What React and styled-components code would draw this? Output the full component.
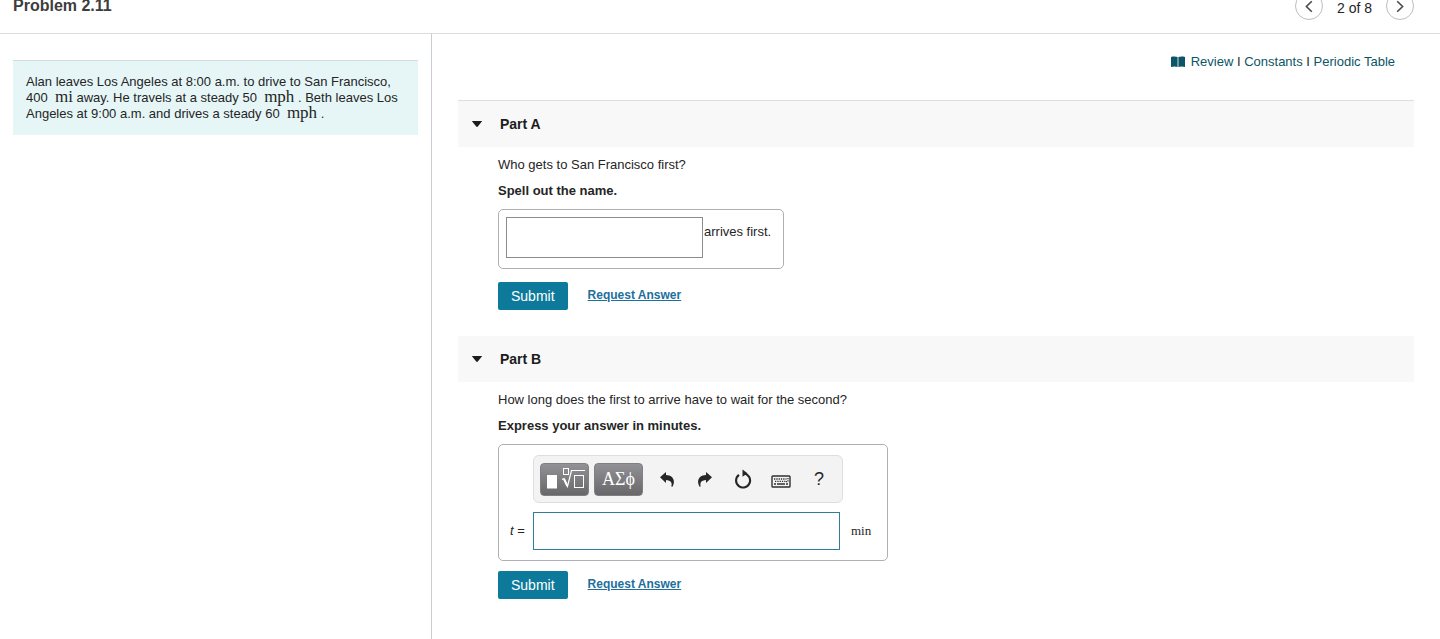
import React, { useState } from "react";
import styled, { createGlobalStyle } from "styled-components";

const GlobalStyle = createGlobalStyle`
  * {
    box-sizing: border-box;
  }

  body {
    margin: 0;
    background: #fff;
    color: #252525;
    font-family: "Liberation Sans", Arial, Helvetica, sans-serif;
    font-size: 13px;
    line-height: 16px;
  }

  button, input {
    font-family: inherit;
  }
`;

const ChevronIcon = ({ right }) => (
  <svg width="8" height="14" viewBox="0 0 8 14" fill="none" stroke="#4a4a4a" strokeWidth="1.6">
    <path d={right ? "M1.2 2.2 6.600 7.500 1.200 12.800" : "M6.800 2.200 1.400 7.500l5.400 5.300"} />
  </svg>
);

const BookIcon = () => (
  <svg width="14" height="12" viewBox="0 0 14 12" fill="#0b5566">
    <path d="M0 .9C2.2 .3 4.8 .3 6.6 1v10C4.8 10.2 2.3 10.2 0 11z" />
    <path d="M14 .9C11.8 .3 9.2 .3 7.4 1v10c1.8-.8 4.3-.8 6.6 0z" />
  </svg>
);

const CaretIcon = () => (
  <svg width="12" height="6" viewBox="0 0 12 6" fill="#1c1c1c">
    <path d="M.8 0h10.4L7 5.3a1.300 1.300 0 0 1-2 0z" />
  </svg>
);

const TemplateIcon = () => (
  <svg width="40" height="24" viewBox="0 0 40 24" fill="none" stroke="#fff">
    <rect x="2" y="8" width="10" height="13.5" fill="#fff" stroke="none" />
    <rect x="18.500" y="1.500" width="5" height="6" />
    <path d="M17 12.500l2-1 3.500 8L26.500 3.500H40" strokeWidth="1.200" />
    <path d="M19 12l3.300 7" strokeWidth="2" />
    <rect x="29.500" y="8.500" width="9" height="12" />
  </svg>
);

const ArrowIcon = ({ flip }) => (
  <svg width="14" height="16" viewBox="0 -1 14 16" fill="#262626">
    <path
      transform={flip ? "matrix(-1 0 0 1 14 0)" : undefined}
      d="M0 5.300 6 0v3c4.500.2 7.800 2.600 7.900 6.600 0 2-.5 3.700-1.500 5.100l-1.100-.2c.5-1.500.5-3-.2-4.200C10.200 8.700 8.400 8 6 7.900V11z"
    />
  </svg>
);

const ResetIcon = () => (
  <svg width="18" height="20" viewBox="0 0 18 20" fill="none">
    <path d="M9.500 4.500A7 7 0 1 1 5 5.800" stroke="#262626" strokeWidth="2.100" />
    <path d="M8.500.5l5 3.700-5 3.600z" fill="#262626" />
  </svg>
);

const KeyboardIcon = () => (
  <svg width="20" height="17" viewBox="0 -4 20 17" fill="none" stroke="#303030">
    <rect x="1" y="1" width="18" height="11" rx=".8" strokeWidth="1.400" />
    <path d="M3 4h12.500M4 6.300h11M17 3v3.600h-2" strokeWidth="1.300" strokeDasharray="1.300 1" />
    <path d="M3 9h2M6 9h8M15 9h2" strokeWidth="1.400" />
  </svg>
);

const PartHeading = ({ title, divided, open, onToggle }) => (
  <PartHeader $divided={divided}>
    <PartToggle type="button" aria-expanded={open} onClick={onToggle}>
      <CaretIcon />
      {title}
    </PartToggle>
  </PartHeader>
);

const SubmitRow = ({ tight }) => (
  <Actions $tight={tight}>
    <Submit type="submit">Submit</Submit>
    <RequestLink href="#request">Request Answer</RequestLink>
  </Actions>
);

const App = () => {
  const [openA, setOpenA] = useState(true);
  const [openB, setOpenB] = useState(true);
  const [name, setName] = useState("");
  const [time, setTime] = useState("");

  const handleSubmit = (e) => e.preventDefault();

  return (
    <Page>
      <GlobalStyle />
      <Header>
        <Title>Problem 2.11</Title>
        <Pager>
          <PagerButton type="button" aria-label="Previous">
            <ChevronIcon />
          </PagerButton>
          <PagerText>2 of 8</PagerText>
          <PagerButton type="button" aria-label="Next">
            <ChevronIcon right />
          </PagerButton>
        </Pager>
      </Header>

      <Columns>
        <Aside>
          <Statement>
            Alan leaves Los Angeles at 8:00 a.m. to drive to San Francisco, 400 &nbsp;<Unit>mi</Unit> away.
            He travels at a steady 50 &nbsp;<Unit>mph</Unit>&nbsp;. Beth leaves Los Angeles at 9:00 a.m.
            and drives a steady 60 &nbsp;<Unit>mph</Unit>&nbsp;.
          </Statement>
        </Aside>

        <Main>
          <Resources>
            <BookIcon />
            <span>
              <ResourceLink href="#review">Review</ResourceLink> I{" "}
              <ResourceLink href="#constants">Constants</ResourceLink> I{" "}
              <ResourceLink href="#table">Periodic Table</ResourceLink>
            </span>
          </Resources>

          <PartHeading title="Part A" divided open={openA} onToggle={() => setOpenA(!openA)} />
          {openA && (
            <PartBody onSubmit={handleSubmit}>
              <Text>Who gets to San Francisco first?</Text>
              <Text $bold>Spell out the name.</Text>
              <NameBox>
                <NameInput id="name" value={name} onChange={(e) => setName(e.target.value)} />
                <NameLabel htmlFor="name">arrives first.</NameLabel>
              </NameBox>
              <SubmitRow />
            </PartBody>
          )}

          <PartHeading title="Part B" open={openB} onToggle={() => setOpenB(!openB)} />
          {openB && (
            <PartBody onSubmit={handleSubmit}>
              <Text>How long does the first to arrive have to wait for the second?</Text>
              <Text $bold>Express your answer in minutes.</Text>
              <MathBox>
                <Toolbar>
                  <PaletteButton type="button" aria-label="Templates">
                    <TemplateIcon />
                  </PaletteButton>
                  <PaletteButton type="button">ΑΣϕ</PaletteButton>
                  <Tools>
                    <ToolButton type="button" aria-label="Undo">
                      <ArrowIcon />
                    </ToolButton>
                    <ToolButton type="button" aria-label="Redo">
                      <ArrowIcon flip />
                    </ToolButton>
                    <ToolButton type="button" aria-label="Reset">
                      <ResetIcon />
                    </ToolButton>
                    <ToolButton type="button" aria-label="Keyboard shortcuts">
                      <KeyboardIcon />
                    </ToolButton>
                    <ToolButton type="button">?</ToolButton>
                  </Tools>
                </Toolbar>
                <MathLabel htmlFor="time">
                  <i>t</i> =
                </MathLabel>
                <MathInput id="time" value={time} onChange={(e) => setTime(e.target.value)} />
                <Minutes>min</Minutes>
              </MathBox>
              <SubmitRow tight />
            </PartBody>
          )}
        </Main>
      </Columns>
    </Page>
  );
};

export default App;

/* -------------------- Styled Components -------------------- */
const Page = styled.div`
  display: flex;
  flex-direction: column;
  height: 100vh;
  overflow: hidden;
`;

const Header = styled.header`
  display: flex;
  flex-shrink: 0;
  justify-content: space-between;
  align-items: center;
  height: 56px;
  margin-top: -22px;
  padding: 0 26px 0 13px;
  border-bottom: 1px solid #dcdcdf;
`;

const Title = styled.h1`
  margin: 0;
  color: #3d3d3d;
  font-size: 16px;
  line-height: 18px;
`;

const Pager = styled.nav`
  display: flex;
  align-items: center;
  gap: 14px;
`;

const PagerButton = styled.button`
  display: flex;
  align-items: center;
  justify-content: center;
  width: 28px;
  height: 28px;
  padding: 0;
  background: #fff;
  border: 1px solid #bdbdbd;
  border-radius: 50%;
  cursor: pointer;
`;

const PagerText = styled.span`
  padding-top: 4px;
  font-size: 14px;
`;

const Columns = styled.div`
  display: flex;
  flex: 1;
`;

const Aside = styled.aside`
  width: 30%;
  padding: 26px 13px;
  border-right: 1px solid #c9ccd2;
`;

const Statement = styled.p`
  margin: 0;
  padding: 13px;
  background: #e6f6f7;
  border-top: 1px solid #d6dadb;
`;

const Unit = styled.span`
  font-family: "Liberation Serif", "Times New Roman", serif;
  font-size: 17px;
  line-height: 0;
`;

const Main = styled.main`
  flex: 1;
  padding: 20px 26px;
`;

const Resources = styled.nav`
  display: flex;
  align-items: center;
  justify-content: flex-end;
  gap: 6px;
  padding: 0 19px 30px 0;
`;

const ResourceLink = styled.a`
  color: #0b5566;
  text-decoration: none;

  &:hover {
    text-decoration: underline;
  }
`;

const PartHeader = styled.h2`
  margin: 0;
  background: #f8f8f8;
  border-top: ${(props) => (props.$divided ? "1px solid #dedede" : "none")};
`;

const PartToggle = styled.button`
  display: flex;
  align-items: center;
  gap: 17px;
  width: 100%;
  height: 46px;
  padding: 0 13px;
  background: none;
  border: none;
  color: #1c1c1c;
  font-size: 14px;
  font-weight: bold;
  cursor: pointer;
`;

const PartBody = styled.form`
  display: flex;
  flex-direction: column;
  align-items: flex-start;
  gap: 10px;
  padding: 10px 0 26px 40px;
`;

const Text = styled.p`
  margin: 0;
  font-weight: ${(props) => (props.$bold ? "bold" : "normal")};
`;

const AnswerBox = styled.div`
  border: 1px solid #b0b0b0;
  border-radius: 5px;
`;

const NameBox = styled(AnswerBox)`
  display: flex;
  gap: 1px;
  padding: 7px 12px 10px 7px;
`;

const NameInput = styled.input`
  width: 197px;
  height: 41px;
  padding: 0 8px;
  border: 1px solid #8c8c8c;
  font-size: 14px;
`;

const NameLabel = styled.label`
  padding-top: 7px;
`;

const MathBox = styled(AnswerBox)`
  display: grid;
  grid-template-columns: 15px auto auto;
  align-items: center;
  gap: 9px 8px;
  padding: 10px 16px 10px 11px;
`;

const Toolbar = styled.div`
  display: flex;
  grid-column: 2;
  gap: 5px;
  align-items: center;
  height: 48px;
  padding: 0 4px 0 6px;
  background: #f3f3f3;
  border: 1px solid #dedede;
  border-radius: 6px;
`;

const PaletteButton = styled.button`
  display: flex;
  align-items: center;
  justify-content: center;
  width: 49px;
  height: 33px;
  padding: 0;
  background: linear-gradient(#929296, #68686b);
  border: 1px solid #808083;
  border-radius: 4px;
  color: #fff;
  font-family: "Liberation Serif", "Times New Roman", serif;
  font-size: 18px;
  cursor: pointer;
`;

const Tools = styled.div`
  display: flex;
`;

const ToolButton = styled.button`
  display: flex;
  align-items: center;
  justify-content: center;
  width: 38px;
  height: 33px;
  padding: 0;
  background: none;
  border: none;
  color: #262626;
  font-size: 18px;
  cursor: pointer;
`;

const MathLabel = styled.label`
  grid-column: 1;
  font-size: 13px;
  white-space: nowrap;
`;

const MathInput = styled.input`
  width: 307px;
  height: 38px;
  padding: 0 8px;
  border: 1px solid #2f7f99;
  font-size: 14px;
`;

const Minutes = styled.span`
  font-family: "Liberation Serif", "Times New Roman", serif;
  font-size: 13px;
`;

const Actions = styled.div`
  display: flex;
  align-items: center;
  gap: 20px;
  padding-top: ${(props) => (props.$tight ? "0" : "3px")};
`;

const Submit = styled.button`
  height: 28px;
  padding: 0 13px;
  background: #0d7a9c;
  border: none;
  border-radius: 2px;
  color: #fff;
  font-size: 14px;
  cursor: pointer;
`;

const RequestLink = styled.a`
  padding-bottom: 2px;
  color: #1d6f9c;
  font-size: 12px;
  font-weight: bold;
`;
